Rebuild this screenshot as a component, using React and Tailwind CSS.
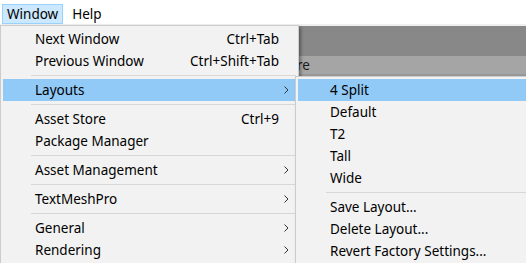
import React from "react";

const mainItems = [
  { label: "Next Window", shortcut: "Ctrl+Tab" },
  { label: "Previous Window", shortcut: "Ctrl+Shift+Tab" },
  { sep: true },
  { label: "Layouts", sub: true, active: true },
  { sep: true },
  { label: "Asset Store", shortcut: "Ctrl+9" },
  { label: "Package Manager" },
  { sep: true },
  { label: "Asset Management", sub: true },
  { sep: true },
  { label: "TextMeshPro", sub: true },
  { sep: true },
  { label: "General", sub: true },
  { label: "Rendering", sub: true },
];

const layoutItems = [
  { label: "4 Split", active: true },
  { label: "Default" },
  { label: "T2" },
  { label: "Tall" },
  { label: "Wide" },
  { sep: true },
  { label: "Save Layout..." },
  { label: "Delete Layout..." },
  { label: "Revert Factory Settings..." },
];

function Chevron() {
  return (
    <svg width="5" height="8" viewBox="0 0 5 8" className="shrink-0">
      <polyline points="0.5,0.5 4,4 0.5,7.5" fill="none" stroke="#333" strokeWidth="1" />
    </svg>
  );
}

function MenuRow({ item }) {
  if (item.sep) {
    return (
      <div className="h-[7px] flex items-center pl-[28px]">
        <div className="h-px w-full bg-[#d7d7d7]" />
      </div>
    );
  }
  return (
    <div
      className={`h-[22px] flex items-center pl-[32px] pr-[7px] ${
        item.active ? "bg-[#91c9f7]" : ""
      }`}
    >
      <span className="flex-1 whitespace-nowrap pt-[2px]">{item.label}</span>
      {item.shortcut && <span className="mr-[10px] whitespace-nowrap pt-[2px]">{item.shortcut}</span>}
      {item.sub && <Chevron />}
    </div>
  );
}

export default function App() {
  return (
    <div className="relative w-[526px] h-[263px] overflow-hidden bg-white text-black font-['Noto_Sans',sans-serif] text-[13.5px] leading-none">
      {/* menu bar */}
      <div className="h-[24px] flex items-end pl-[2px] gap-[4px]">
        <div className="h-[20px] px-[4px] pt-[2px] flex items-center bg-[#cce8ff] border border-[#99d1ff]">
          Window
        </div>
        <div className="h-[20px] px-[5px] pt-[2px] flex items-center">Help</div>
      </div>

      {/* app behind the menu */}
      <div className="h-[2px] bg-[#f0f0f0]" />
      <div className="h-[30px] bg-[#888888]" />
      <div className="h-[18px] bg-[#a5a5a5] flex items-center pl-[297px] pt-[2px] text-[#1a1a1a]">
        re
      </div>
      <div className="h-[2px] bg-[#999999]" />
      <div className="h-[187px] bg-[#f0f0f0]" />

      {/* window menu */}
      <div className="absolute left-0 top-[25px] w-[299px] h-[250px] bg-[#f2f2f2] border border-[#cccccc] p-[2px] shadow-[2px_2px_3px_rgba(0,0,0,0.35)]">
        {mainItems.map((item, i) => (
          <MenuRow key={i} item={item} />
        ))}
      </div>

      {/* layouts submenu */}
      <div className="absolute left-[295px] top-[76px] w-[260px] h-[200px] bg-[#f2f2f2] border border-[#cccccc] p-[2px] shadow-[2px_2px_3px_rgba(0,0,0,0.35)]">
        {layoutItems.map((item, i) => (
          <MenuRow key={i} item={item} />
        ))}
      </div>
    </div>
  );
}
